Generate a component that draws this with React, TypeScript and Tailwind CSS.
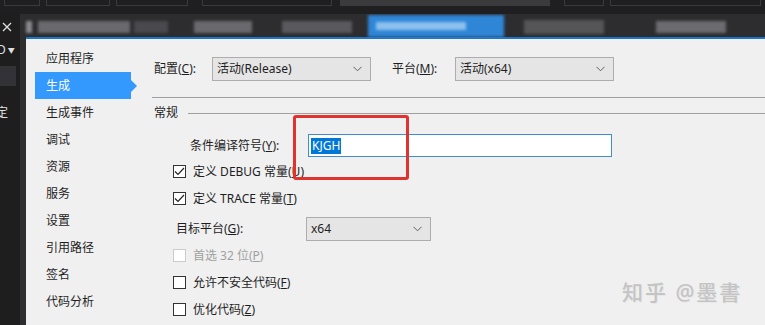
import React from 'react'

const font = { fontFamily: "'Noto Sans', 'Noto Sans CJK SC', sans-serif" }

function Chevron() {
  return (
    <svg width="9" height="6" viewBox="0 0 9 6" className="shrink-0">
      <path d="M0.5 0.8 L4.5 4.8 L8.5 0.8" fill="none" stroke="#606060" strokeWidth="1" />
    </svg>
  )
}

function Select({ value, width }: { value: string; width: string }) {
  return (
    <div className={`${width} h-[24px] bg-[#e5e5e5] border border-[#adadad] flex items-center justify-between pl-[4px] pr-[8px] text-[12px] text-[#1e1e1e]`}>
      <span>{value}</span>
      <Chevron />
    </div>
  )
}

function Check({ checked, disabled }: { checked?: boolean; disabled?: boolean }) {
  return (
    <div
      className={`w-[13px] h-[13px] border bg-white flex items-center justify-center shrink-0 ${
        disabled ? 'border-[#cccccc]' : 'border-[#333333]'
      }`}
    >
      {checked && (
        <svg width="11" height="9" viewBox="0 0 11 9">
          <path d="M1 4.5 L4 7.5 L10 1" fill="none" stroke="#222222" strokeWidth="1.2" />
        </svg>
      )}
    </div>
  )
}

function CheckRow({ label, checked, disabled }: { label: React.ReactNode; checked?: boolean; disabled?: boolean }) {
  return (
    <div className="h-[27px] flex items-center gap-[7px] pl-[21px] shrink-0">
      <Check checked={checked} disabled={disabled} />
      <span className={disabled ? 'text-[#a0a0a0]' : 'text-[#1e1e1e]'}>{label}</span>
    </div>
  )
}

const navItems = ['应用程序', '生成', '生成事件', '调试', '资源', '服务', '设置', '引用路径', '签名', '代码分析']

export default function App() {
  return (
    <div className="w-[765px] h-[325px] bg-[#2d2d30] flex flex-col overflow-hidden text-[12px]" style={font}>
      {/* title strip */}
      <div className="h-[14px] shrink-0 bg-[#1f1f21] flex items-start gap-[6px] px-[4px]">
        <div className="w-[36px] h-[6px] border border-[#3a3a3d] border-t-0" />
        <div className="w-[64px] h-[6px] border border-[#3a3a3d] border-t-0" />
        <div className="w-[72px] h-[6px] border border-[#3a3a3d] border-t-0" />
        <div className="w-[130px] h-[6px] border border-[#3a3a3d] border-t-0 ml-[8px]" />
        <div className="w-[210px] h-[6px] bg-[#3b3b3e] ml-[2px]" />
        <div className="w-[40px] h-[6px] border border-[#3a3a3d] border-t-0 ml-[8px]" />
        <div className="flex-1 h-[6px] border border-[#3a3a3d] border-t-0" />
      </div>

      <div className="flex-1 flex min-h-0 overflow-hidden">
        {/* left tool strip */}
        <div className="w-[26px] shrink-0 flex">
          <div className="w-[20px] bg-[#1e1e1e] flex flex-col text-[#e0e0e0] overflow-hidden">
            <div className="h-[25px] shrink-0 pt-[8px] pl-[2px]">
              <svg width="10" height="10" viewBox="0 0 10 10">
                <path d="M1 1 L9 9 M9 1 L1 9" stroke="#e0e0e0" strokeWidth="1.3" />
              </svg>
            </div>
            <div className="h-[22px] shrink-0 flex items-center text-[12px] leading-none">
              <span className="-ml-[3px]">D</span>
              <span className="text-[7px] ml-[2px]">▼</span>
            </div>
            <div className="h-[20px] w-[16px] shrink-0 bg-[#333337] mt-[5px]" />
            <div className="mt-[19px] text-[12px] leading-[16px]">
              <span className="-ml-[4px] inline-block">定</span>
            </div>
          </div>
          <div className="w-[6px] bg-[#2d2d30]" />
        </div>

        <div className="flex-1 flex flex-col min-w-0">
          {/* blurred document tabs */}
          <div className="h-[23px] shrink-0 flex items-end">
            <div className="flex items-end h-full blur-[1.5px]">
              <div className="w-[6px] h-[12px] mb-[4px] bg-[#8a8a8e]" />
              <div className="w-[92px] h-[12px] mb-[4px] bg-[#6a6a6e] ml-[6px]" />
              <div className="w-[34px] h-[12px] mb-[4px] bg-[#4a4a4e] ml-[4px]" />
              <div className="w-[58px] h-[12px] mb-[4px] bg-[#6a6a6e] ml-[26px]" />
              <div className="w-[70px] h-[12px] mb-[4px] bg-[#5a5a5e] ml-[30px]" />
              <div className="w-[136px] h-[22px] bg-[#2f86d6] ml-[16px] flex items-center px-[8px]">
                <div className="w-[90px] h-[8px] bg-[#8cc0ee]" />
              </div>
              <div className="w-[80px] h-[14px] mb-[3px] bg-[#555558] ml-[20px]" />
              <div className="w-[70px] h-[12px] mb-[4px] bg-[#6c6c70] ml-[52px]" />
            </div>
          </div>
          <div className="h-[2px] shrink-0 bg-[#1c76c8]" />

          {/* property page */}
          <div className="flex-1 min-h-0 bg-[#f0f0f0] flex text-[#1e1e1e] relative overflow-hidden">
            <div className="w-[114px] shrink-0 pt-[6px] pl-[9px]">
              {navItems.map((item) =>
                item === '生成' ? (
                  <div key={item} className="relative w-[96px] h-[27px] bg-[#3399ff] text-white flex items-center pl-[11px]">
                    {item}
                    <div className="absolute left-[96px] top-[8px] w-0 h-0 border-y-[6px] border-y-transparent border-l-[6px] border-l-[#3399ff]" />
                  </div>
                ) : (
                  <div key={item} className="h-[27px] flex items-center pl-[11px]">
                    {item}
                  </div>
                )
              )}
            </div>

            <div className="flex-1 flex flex-col pl-[12px]">
              <div className="flex items-center mt-[18px] h-[24px] shrink-0 pl-[2px]">
                <span className="w-[58px]">
                  配置(<u>C</u>):
                </span>
                <Select value="活动(Release)" width="w-[159px]" />
                <span className="ml-[21px] w-[63px]">
                  平台(<u>M</u>):
                </span>
                <Select value="活动(x64)" width="w-[159px]" />
              </div>

              <div className="h-px shrink-0 bg-[#a0a0a0] mt-[16px]" />

              <div className="flex items-center mt-[7px] h-[16px] shrink-0 pl-[2px]">
                <span>常规</span>
                <div className="flex-1 h-px bg-[#a0a0a0] ml-[10px]" />
              </div>

              <div className="flex items-center mt-[13px] h-[23px] shrink-0 pl-[38px]">
                <span className="w-[118px]">
                  条件编译符号(<u>Y</u>):
                </span>
                <div className="w-[304px] h-[23px] bg-white border border-[#3d8fcf] flex items-center pl-[2px]">
                  <span className="bg-[#0078d7] text-white px-[1px] leading-[16px]">KJGH</span>
                </div>
              </div>

              <div className="mt-[1px]">
                <CheckRow checked label={<>定义 DEBUG 常量(<u>U</u>)</>} />
                <CheckRow checked label={<>定义 TRACE 常量(<u>T</u>)</>} />
              </div>

              <div className="flex items-center h-[24px] shrink-0 mt-[5px] pl-[24px]">
                <span className="w-[130px]">
                  目标平台(<u>G</u>):
                </span>
                <Select value="x64" width="w-[125px]" />
              </div>

              <div className="mt-[1px]">
                <CheckRow disabled label={<>首选 32 位(<u>P</u>)</>} />
                <CheckRow label={<>允许不安全代码(<u>F</u>)</>} />
                <CheckRow label={<>优化代码(<u>Z</u>)</>} />
              </div>
            </div>

            {/* red annotation box */}
            <div className="absolute left-[267px] top-[76px] w-[116px] h-[65px] border-[3px] border-[#e0322e] rounded-[3px]" />

            {/* watermark */}
            <div className="absolute left-[596px] top-[238px] text-[21px] font-medium text-[#c4c4c4] tracking-[2px] [text-shadow:1px_1px_0_#e8e8e8]">
              知乎 @墨書
            </div>
          </div>
        </div>
      </div>
    </div>
  )
}
